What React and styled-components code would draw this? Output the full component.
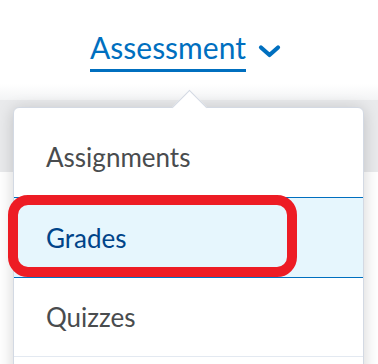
import React from 'react';
import styled, { createGlobalStyle } from 'styled-components';

const GlobalStyle = createGlobalStyle`
  html, body {
    margin: 0;
    padding: 0;
    background: #ffffff;
    font-family: Lato, "Open Sans", "Liberation Sans", sans-serif;
  }
`;

const Page = styled.div`
  width: 378px;
  height: 364px;
  overflow: hidden;
  background: #ffffff;
`;

const Header = styled.header`
  height: 100px;
  display: flex;
  align-items: flex-start;
  padding-left: 90px;
  box-sizing: border-box;
  background: linear-gradient(to bottom, #ffffff 84%, #f3f4f5 100%);
`;

const NavLink = styled.a`
  display: flex;
  align-items: center;
  gap: 12px;
  margin-top: 29px;
  color: #006fbf;
  text-decoration: none;
  cursor: pointer;
`;

const NavLabel = styled.span`
  font-size: 30px;
  line-height: 36px;
  padding-bottom: 4px;
  border-bottom: 3px solid #006fbf;
`;

const Chevron = styled.svg`
  width: 23px;
  height: 14px;
`;

const Body = styled.div`
  position: relative;
`;

const Band = styled.div`
  height: 72px;
  background: #e9eaec;
`;

const Menu = styled.div`
  position: absolute;
  top: 7px;
  left: 13px;
  width: 351px;
  padding: 9px 0 40px;
  box-sizing: border-box;
  background: #ffffff;
  border: 1px solid #d3d9e3;
  border-radius: 6px;
  box-shadow: 0 2px 16px rgba(0, 0, 0, 0.18);
`;

const Pointer = styled.div`
  position: absolute;
  top: -13px;
  left: 163px;
  width: 24px;
  height: 24px;
  background: #ffffff;
  border-top: 1px solid #d3d9e3;
  border-left: 1px solid #d3d9e3;
  transform: rotate(45deg);
`;

const Item = styled.div`
  position: relative;
  box-sizing: border-box;
  height: ${p => p.h}px;
  display: flex;
  align-items: center;
  padding-left: 32px;
  font-size: 26px;
  color: ${p => (p.active ? '#004489' : '#494c4e')};
  background: ${p => (p.active ? '#e6f6fd' : 'transparent')};
  border-top: ${p => (p.active ? '1px solid #006fbf' : 'none')};
  border-bottom: ${p =>
    p.active ? '1px solid #006fbf' : p.last ? '1px solid #e3e9f1' : 'none'};
`;

const Highlight = styled.div`
  position: absolute;
  top: -3px;
  left: -6px;
  width: 289px;
  height: 82px;
  box-sizing: border-box;
  border: 10px solid #ed1c24;
  border-radius: 20px;
  pointer-events: none;
`;

export default function App() {
  return (
    <Page>
      <GlobalStyle />
      <Header>
        <NavLink>
          <NavLabel>Assessment</NavLabel>
          <Chevron viewBox="0 0 23 14">
            <path
              d="M3 3.5 L11.5 11 L20 3.5"
              fill="none"
              stroke="#006fbf"
              strokeWidth="4.2"
              strokeLinecap="round"
              strokeLinejoin="round"
            />
          </Chevron>
        </NavLink>
      </Header>
      <Body>
        <Band />
        <Menu>
          <Pointer />
          <Item h={80}>Assignments</Item>
          <Item h={81} active>
            Grades
            <Highlight />
          </Item>
          <Item h={79} last>
            Quizzes
          </Item>
        </Menu>
      </Body>
    </Page>
  );
}
